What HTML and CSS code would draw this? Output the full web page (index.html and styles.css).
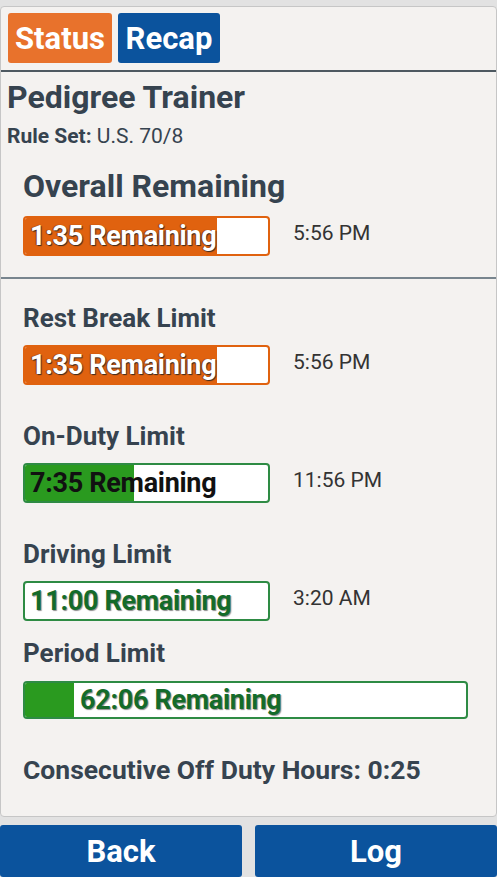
FILE: index.html
```html
<!DOCTYPE html>
<html lang="en">
<head>
    <meta charset="UTF-8">
    <meta name="viewport" content="width=device-width, initial-scale=1.0">
    <title>Status</title>
    <link rel="stylesheet" href="styles.css">
</head>
<body>
    <div class="card">
        <div class="tabs">
            <button class="tab tab-status">Status</button>
            <button class="tab tab-recap">Recap</button>
        </div>
        <hr class="rule-dark">
        <h1 class="driver">Pedigree Trainer</h1>
        <p class="ruleset"><b>Rule Set:</b> U.S. 70/8</p>

        <div class="section">
            <h2 class="overall-title">Overall Remaining</h2>
            <div class="limit-row overall-row">
                <div class="bar bar-orange">
                    <div class="fill" style="width: 79%"></div>
                    <span class="bar-text">1:35 Remaining</span>
                </div>
                <span class="time">5:56 PM</span>
            </div>
        </div>
        <hr class="rule-grey">

        <div class="section">
            <h3 class="limit-title first">Rest Break Limit</h3>
            <div class="limit-row">
                <div class="bar bar-orange">
                    <div class="fill" style="width: 79%"></div>
                    <span class="bar-text">1:35 Remaining</span>
                </div>
                <span class="time">5:56 PM</span>
            </div>

            <h3 class="limit-title">On-Duty Limit</h3>
            <div class="limit-row">
                <div class="bar bar-green">
                    <div class="fill" style="width: 45%"></div>
                    <span class="bar-text text-black">7:35 Remaining</span>
                </div>
                <span class="time">11:56 PM</span>
            </div>

            <h3 class="limit-title">Driving Limit</h3>
            <div class="limit-row">
                <div class="bar bar-green">
                    <div class="fill" style="width: 0%"></div>
                    <span class="bar-text text-green">11:00 Remaining</span>
                </div>
                <span class="time">3:20 AM</span>
            </div>

            <h3 class="limit-title period-title">Period Limit</h3>
            <div class="bar bar-green bar-wide">
                <div class="fill" style="width: 11%"></div>
                <span class="bar-text text-green">62:06 Remaining</span>
            </div>

            <h3 class="limit-title offduty">Consecutive Off Duty Hours: 0:25</h3>
        </div>
    </div>

    <div class="footer">
        <button class="foot-btn">Back</button>
        <button class="foot-btn">Log</button>
    </div>
</body>
</html>
```

FILE: styles.css
```css
body {
    font-family: Roboto, 'Liberation Sans', sans-serif;
    margin: 0;
    padding: 6px 0 0;
    background-color: #e2e2e2;
    color: #36434f;
    width: 497px;
    height: 871px;
    overflow: hidden;
}
.card {
    background-color: #f4f2f0;
    border: 1px solid #c6c6c6;
    border-radius: 4px;
    height: 811px;
    box-sizing: border-box;
}
.tabs {
    display: flex;
    gap: 6px;
    padding: 6px 0 0 7px;
}
.tab {
    font-family: inherit;
    font-size: 31px;
    font-weight: bold;
    color: #fff;
    border: none;
    border-radius: 3px;
    height: 50px;
    padding: 0;
    cursor: pointer;
}
.tab-status {
    width: 104px;
    background-color: #e8722c;
}
.tab-recap {
    width: 102px;
    background-color: #0b539d;
}
hr {
    margin: 0;
    border: none;
}
.rule-dark {
    margin-top: 7px;
    height: 2px;
    background-color: #4e5961;
}
.rule-grey {
    height: 2px;
    background-color: #78858e;
}
.driver {
    font-size: 32px;
    margin: 7px 0 0 6px;
    line-height: 36px;
}
.ruleset {
    font-size: 21px;
    margin: 9px 0 0 6px;
    line-height: 24px;
}
.section {
    padding-left: 22px;
}
.overall-title {
    font-size: 32px;
    margin: 20px 0 0;
    line-height: 36px;
}
.limit-title {
    font-size: 26px;
    margin: 36px 0 0;
    line-height: 30px;
}
.limit-title.first {
    margin-top: 24px;
}
.limit-title.period-title {
    margin-top: 17px;
}
.limit-title.offduty {
    font-size: 26.5px;
}
.limit-row {
    display: flex;
    align-items: center;
    gap: 23px;
    margin-top: 12px;
}
.overall-row {
    margin-bottom: 21px;
}
.bar {
    position: relative;
    width: 247px;
    height: 40px;
    box-sizing: border-box;
    border: 2px solid;
    border-radius: 4px;
    background-color: #fff;
    overflow: hidden;
    flex-shrink: 0;
}
.bar .fill {
    height: 100%;
}
.bar-orange {
    border-color: #e0620f;
}
.bar-orange .fill {
    background-color: #e0620f;
}
.bar-green {
    border-color: #2e8b44;
}
.bar-green .fill {
    background-color: #2a9a1f;
}
.bar-wide {
    width: 445px;
    height: 38px;
    margin-top: 13px;
}
.bar-text {
    position: absolute;
    left: 5px;
    top: 0;
    line-height: 36px;
    font-size: 27px;
    font-weight: bold;
    letter-spacing: -0.3px;
    color: #fff;
    text-shadow: 1px 1px 1px #3a2a20, -1px 0 1px rgba(0,0,0,0.4);
    white-space: nowrap;
}
.bar .text-black {
    color: #111;
    text-shadow: none;
}
.bar .text-green {
    color: #146b2a;
    text-shadow: 1px 1px 1px rgba(0,0,0,0.45);
}
.bar-wide .bar-text {
    left: 55px;
    line-height: 34px;
}
.time {
    font-size: 21px;
    color: #333;
    margin-bottom: 6px;
}
.footer {
    display: flex;
    justify-content: space-between;
    margin-top: 8px;
}
.foot-btn {
    width: 242px;
    height: 52px;
    font-family: inherit;
    font-size: 31px;
    font-weight: bold;
    color: #fff;
    background-color: #0b539d;
    border: none;
    border-radius: 3px;
    cursor: pointer;
}
```
